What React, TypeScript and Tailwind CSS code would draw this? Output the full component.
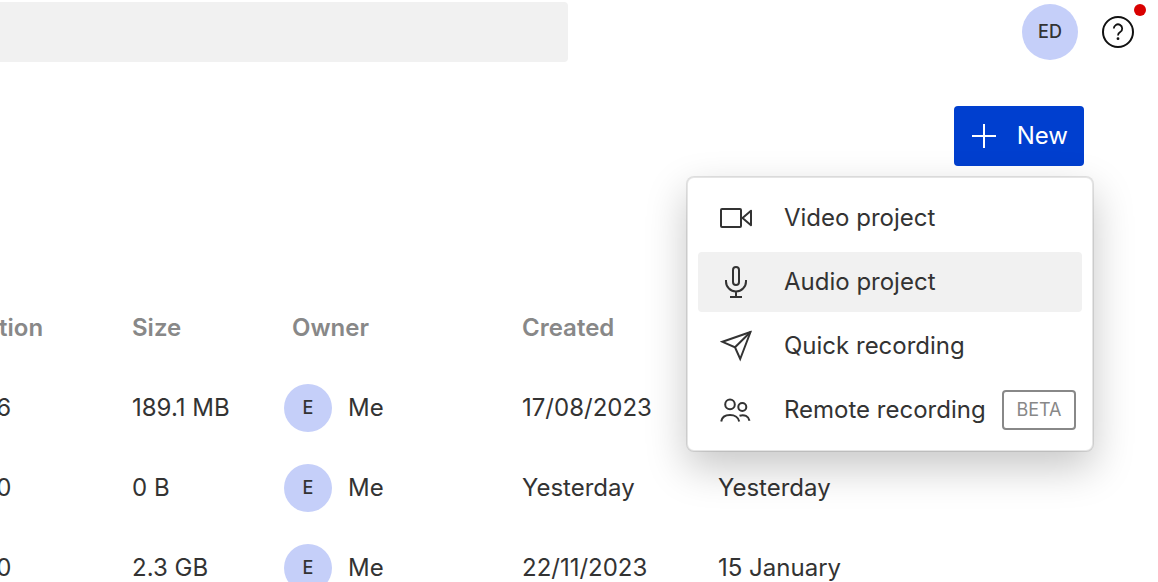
import type { ReactNode } from "react";

const projects = [
  { duration: "00:06", size: "189.1 MB", created: "17/08/2023", modified: "" },
  { duration: "00:00", size: "0 B", created: "Yesterday", modified: "Yesterday" },
  { duration: "00:00", size: "2.3 GB", created: "22/11/2023", modified: "15 January" },
];

function Icon({ children }: { children: ReactNode }) {
  return (
    <svg
      className="size-8 shrink-0"
      viewBox="0 0 32 32"
      fill="none"
      stroke="currentColor"
      strokeWidth="2"
      aria-hidden="true"
    >
      {children}
    </svg>
  );
}

const menuItems = [
  {
    label: "Video project",
    icon: (
      <Icon>
        <rect x="1" y="7" width="20" height="18" rx="1" />
        <path d="M22.500 16 31 8.700v14.600z" strokeLinejoin="round" />
      </Icon>
    ),
  },
  {
    label: "Audio project",
    active: true,
    icon: (
      <Icon>
        <rect x="13" y="1" width="6" height="18" rx="3" />
        <path d="M6 14v1.500a10 10 0 0 0 20 0V14M16 25.500V31M10 31h12" />
      </Icon>
    ),
  },
  {
    label: "Quick recording",
    icon: (
      <Icon>
        <path d="M30.500 2 2.500 11.800 15 17.300 20.200 29z" />
        <path d="M30.500 2 15 17.300" />
      </Icon>
    ),
  },
  {
    label: "Remote recording",
    badge: "BETA",
    icon: (
      <Icon>
        <circle cx="10" cy="10.400" r="4.800" />
        <circle cx="22.300" cy="13" r="4" />
        <path d="M1.200 27.500C1.800 23.500 5.200 21 10 21s8.600 2.500 9.200 6.500M19.500 21.700c5-1.600 9 .5 10 5" />
      </Icon>
    ),
  },
];

export default function App() {
  return (
    <div className="h-screen overflow-hidden bg-white font-['Inter',sans-serif] text-2xl text-[#333333]">
      <header className="flex items-center justify-between pt-0.5 pr-6">
        <input
          type="search"
          aria-label="Search"
          className="h-15 w-[568px] rounded-r bg-[#f1f1f1] px-6 outline-none"
        />
        <div className="flex items-center gap-6">
          <button
            type="button"
            className="flex size-14 items-center justify-center rounded-full bg-[#c5cff9] text-lg font-medium"
          >
            ED
          </button>
          <button type="button" aria-label="Help" className="relative text-[#111111]">
            <Icon>
              <circle cx="16" cy="16" r="15" />
              <path d="M11.800 12.600a4.200 4.200 0 1 1 6.400 3.500c-1.500.9-2.200 1.600-2.200 3.300" strokeWidth="1.800" />
              <circle cx="16" cy="22.700" r="1.400" fill="currentColor" stroke="none" />
            </Icon>
            <span className="absolute -top-3 -right-3 size-3 rounded-full bg-[#d90000]" />
          </button>
        </div>
      </header>

      <main className="pt-11">
        <div className="flex justify-end pr-[74px]">
          <div className="relative">
            <button
              type="button"
              aria-expanded="true"
              className="flex h-15 min-w-[130px] items-center justify-between gap-5 rounded bg-[#003fcf] pr-4 pl-[18px] text-white"
            >
              <svg
                className="size-6"
                viewBox="0 0 24 24"
                stroke="currentColor"
                strokeWidth="2"
                aria-hidden="true"
              >
                <path d="M12 0v24M0 12h24" />
              </svg>
              New
            </button>
            <div
              role="menu"
              className="absolute top-[70px] -right-2.5 z-10 flex w-[408px] flex-col gap-1 rounded-lg border-2 border-black/10 bg-white bg-clip-padding p-2.5 shadow-[0_16px_40px_rgba(0,0,0,0.22)]"
            >
              {menuItems.map((item) => (
                <button
                  key={item.label}
                  type="button"
                  role="menuitem"
                  className={
                    item.active
                      ? "flex h-15 items-center rounded bg-[#f1f1f1] pr-1.5 pl-[22px]"
                      : "flex h-15 items-center rounded pr-1.5 pl-[22px]"
                  }
                >
                  {item.icon}
                  <span className="pl-8 whitespace-nowrap">{item.label}</span>
                  {item.badge && (
                    <span className="ml-auto flex h-10 w-[74px] items-center justify-center rounded border-2 border-[#888888] text-lg text-[#888888]">
                      {item.badge}
                    </span>
                  )}
                </button>
              ))}
            </div>
          </div>
        </div>

        <div className="-ml-14 pt-[122px] pr-[74px]">
          <table className="w-full table-fixed text-left whitespace-nowrap">
            <colgroup>
              <col className="w-47" />
              <col className="w-38" />
              <col className="w-[238px]" />
              <col className="w-49" />
              <col />
            </colgroup>
            <thead>
              <tr className="h-20 text-[#888888]">
                <th className="font-semibold">Duration</th>
                <th className="font-semibold">Size</th>
                <th className="pl-2 font-semibold">Owner</th>
                <th className="font-semibold">Created</th>
                <th aria-label="Modified" />
              </tr>
            </thead>
            <tbody>
              {projects.map((project) => (
                <tr key={project.size} className="h-20">
                  <td>{project.duration}</td>
                  <td>{project.size}</td>
                  <td>
                    <div className="flex items-center gap-4">
                      <span className="flex size-12 items-center justify-center rounded-full bg-[#c5cff9] text-lg font-medium">
                        E
                      </span>
                      Me
                    </div>
                  </td>
                  <td>{project.created}</td>
                  <td>{project.modified}</td>
                </tr>
              ))}
            </tbody>
          </table>
        </div>
      </main>
    </div>
  );
}
